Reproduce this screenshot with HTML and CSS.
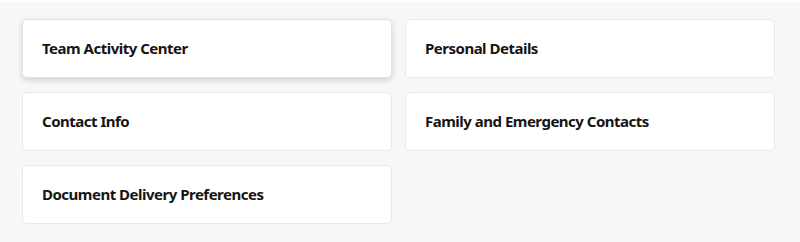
FILE: index.html
```html
<!DOCTYPE html>
<html>
<head>
<meta charset="utf-8">
<link rel="stylesheet" href="styles.css">
</head>
<body>
<div class="page">
  <div class="grid">
    <a class="card card-active">Team Activity Center</a>
    <a class="card">Personal Details</a>
    <a class="card">Contact Info</a>
    <a class="card">Family and Emergency Contacts</a>
    <a class="card">Document Delivery Preferences</a>
  </div>
</div>
</body>
</html>
```
FILE: styles.css
```css
html, body {
  margin: 0;
  padding: 0;
  background: #f8f7f5;
}
.page {
  width: 800px;
  height: 242px;
  box-sizing: border-box;
  padding: 17px 0 0 22px;
  border-top: 2px solid #fcfcfb;
  font-family: "Noto Sans", sans-serif;
}
.grid {
  display: grid;
  grid-template-columns: 370px 370px;
  column-gap: 13px;
  row-gap: 14px;
}
.card {
  display: flex;
  align-items: center;
  height: 59px;
  box-sizing: border-box;
  padding: 0 19px 2px;
  background: #ffffff;
  border: 1px solid #ebe9e6;
  border-radius: 5px;
  color: #161513;
  font-size: 15px;
  font-weight: 700;
  letter-spacing: -0.5px;
}
.card-active {
  border-color: #e4e2df;
  box-shadow: 0 2px 6px rgba(0, 0, 0, 0.16);
}
```
